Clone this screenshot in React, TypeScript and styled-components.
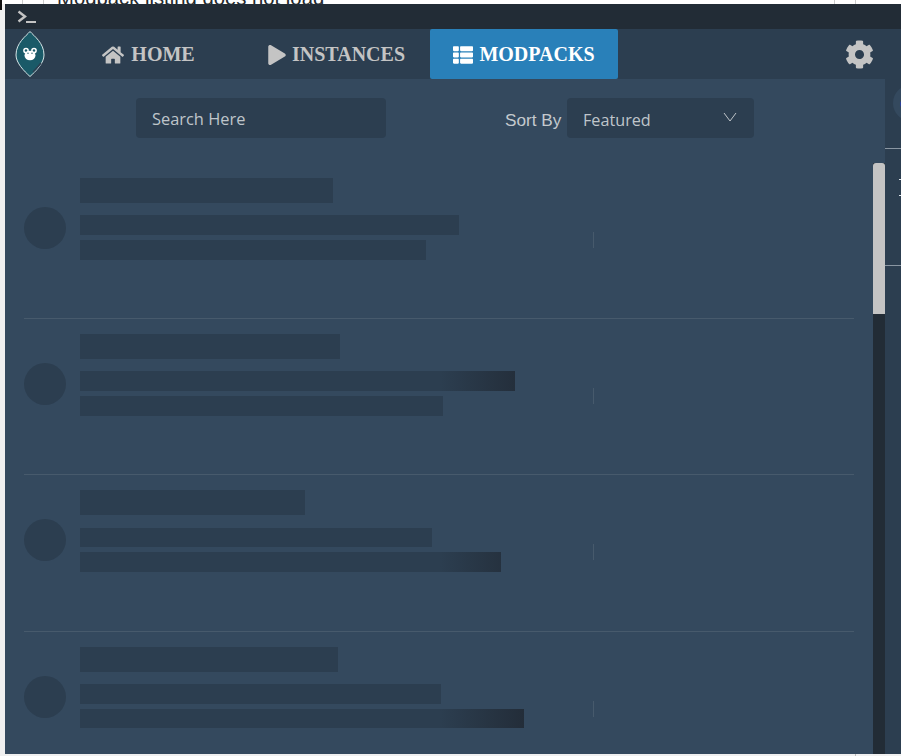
import React from "react";
import styled, { createGlobalStyle } from "styled-components";
import { FaCog, FaHome, FaPlay, FaThList } from "react-icons/fa";

const GlobalStyle = createGlobalStyle`
  html, body {
    margin: 0;
    padding: 0;
    background: #f0f0f0;
    overflow: hidden;
  }
`;

const Page = styled.div`
  width: 901px;
  height: 756px;
  position: relative;
  display: flex;
  flex-direction: column;
  overflow: hidden;
  background: linear-gradient(#bbb, #bbb) 855px 100% / 1px 2px no-repeat, #f0f0f0;
`;

const CornerMark = styled.div`
  position: absolute;
  left: 0;
  top: 0;
  width: 2px;
  height: 10px;
  background: #111;
`;

const BehindStrip = styled.div`
  height: 4px;
  flex: none;
  overflow: hidden;
  background:
    linear-gradient(#ccc, #ccc) 22px 0 / 1px 100% no-repeat,
    linear-gradient(#ccc, #ccc) 43px 0 / 1px 100% no-repeat,
    linear-gradient(#ccc, #ccc) 834px 0 / 1px 100% no-repeat,
    linear-gradient(#ccc, #ccc) 855px 0 / 1px 100% no-repeat,
    #fff;
  padding-left: 57px;
  font: 20.3px/20px "Liberation Sans", Arial, sans-serif;
  color: #24292e;
`;

const BehindText = styled.div`
  margin-top: -12px;
`;

const Window = styled.div`
  flex: 1;
  min-height: 0;
  margin: 0 0 2px 5px;
  display: flex;
  flex-direction: column;
  background: #2c3e50;
`;

const SystemBar = styled.div`
  height: 25px;
  flex: none;
  display: flex;
  align-items: center;
  padding-left: 12px;
  background: #222c36;
`;

const NavBar = styled.nav`
  height: 50px;
  flex: none;
  display: flex;
  align-items: stretch;
  background: #2c3e50;
`;

const LogoSlot = styled.div`
  width: 50px;
  flex: none;
  display: flex;
  align-items: center;
  padding-left: 9px;
  box-sizing: border-box;
`;

const NavItem = styled.a<{ $width: number; $gap: number; $active?: boolean }>`
  width: ${(p) => p.$width}px;
  flex: none;
  display: flex;
  align-items: center;
  justify-content: center;
  gap: ${(p) => p.$gap}px;
  padding-top: 1px;
  box-sizing: border-box;
  border-radius: 2px;
  background: ${(p) => (p.$active ? "#2980b9" : "transparent")};
  color: ${(p) => (p.$active ? "#fff" : "#c4c4c4")};
  font: bold 20px "Liberation Serif", "Times New Roman", serif;
`;

const SettingsButton = styled.div`
  margin-left: auto;
  width: 84px;
  display: flex;
  align-items: center;
  justify-content: center;
  color: #c4c4c4;
`;

const Body = styled.div`
  flex: 1;
  min-height: 0;
  display: flex;
`;

const Content = styled.main`
  width: 880px;
  flex: none;
  display: flex;
  flex-direction: column;
  background: #34495e;
  overflow: hidden;
`;

const Filters = styled.div`
  height: 84px;
  flex: none;
  display: flex;
  padding: 19px 0 0 131px;
  box-sizing: border-box;
`;

const SearchBox = styled.div`
  width: 250px;
  height: 40px;
  border-radius: 4px;
  background: #2c3e50;
  color: #bfc5ca;
  font: 16.4px/42px "Open Sans", sans-serif;
  padding-left: 16px;
  box-sizing: border-box;
`;

const SortLabel = styled.span`
  margin-left: 119px;
  width: 62px;
  color: #c4c9ce;
  font: 17.2px/44px "Liberation Sans", Arial, sans-serif;
`;

const SortSelect = styled.div`
  width: 187px;
  height: 40px;
  border-radius: 4px;
  background: #2c3e50;
  color: #bfc5ca;
  font: 16.2px/45px "Open Sans", sans-serif;
  padding: 0 17px 0 16px;
  box-sizing: border-box;
  display: flex;
  justify-content: space-between;
`;

const Chevron = styled.svg`
  width: 14px;
  height: 10px;
  margin-top: 14px;
`;

const ListArea = styled.div`
  flex: 1;
  min-height: 0;
  display: flex;
`;

const List = styled.div`
  flex: 1;
  min-width: 0;
  overflow: hidden;
`;

const Row = styled.div`
  height: 156.2px;
  box-sizing: border-box;
  margin: 0 19px;
  position: relative;
  padding-top: 15px;
  border-bottom: 1px solid #475a6c;
  display: flex;
  width: 830px;
  &:last-child {
    border-bottom: none;
  }
`;

const Avatar = styled.div`
  width: 42px;
  height: 42px;
  margin-top: 29px;
  margin-right: 14px;
  flex: none;
  border-radius: 50%;
  background: #2c3e50;
`;

const Lines = styled.div`
  display: flex;
  flex-direction: column;
  align-items: flex-start;
`;

const TitleBar = styled.div<{ $width: number }>`
  width: ${(p) => p.$width}px;
  height: 25px;
  margin-bottom: 12.3px;
  background: #2c3e50;
`;

const TextBar = styled.div<{ $width: number; $fade?: boolean }>`
  width: ${(p) => p.$width}px;
  height: 19.7px;
  margin-bottom: 5px;
  background: ${(p) =>
    p.$fade
      ? "linear-gradient(90deg, #2c3e50 0, #2c3e50 360px, #232d39 445px)"
      : "#2c3e50"};
`;

const Tick = styled.div`
  position: absolute;
  left: 569px;
  top: 69px;
  width: 1px;
  height: 16px;
  background: #475a6c;
`;

const ScrollTrack = styled.div`
  width: 12px;
  flex: none;
  background: #222c36;
`;

const ScrollThumb = styled.div`
  height: 151px;
  border-radius: 3px 3px 0 0;
  background: #c4c4c4;
`;

const SidePeek = styled.aside`
  flex: 1;
  min-width: 0;
  position: relative;
  overflow: hidden;
  background: #2c3e50;
`;

const PeekAvatar = styled.div`
  position: absolute;
  left: 8px;
  top: 6px;
  width: 36px;
  height: 36px;
  border-radius: 50%;
  background: #34495e;
`;

const PeekSpot = styled.div`
  position: absolute;
  left: 15px;
  top: 21px;
  width: 4px;
  height: 8px;
  border-radius: 4px 0 0 4px;
  background: #2b3f9e;
`;

const PeekRule = styled.div<{ $top: number }>`
  position: absolute;
  left: 0;
  right: 0;
  top: ${(p) => p.$top}px;
  height: 1px;
  background: #8a96a2;
`;

const PeekMark = styled.div<{ $top: number }>`
  position: absolute;
  right: 0;
  top: ${(p) => p.$top}px;
  width: 2px;
  height: 1px;
  background: #dfe6ec;
`;

const rows = [
  { title: 253, a: 379, b: 346 },
  { title: 260, a: 435, b: 363, fadeA: true },
  { title: 225, a: 352, b: 421, fadeB: true },
  { title: 258, a: 361, b: 444, fadeB: true },
];

function TerminalMark() {
  return (
    <svg width="20" height="14" viewBox="0 0 20 14" fill="none" stroke="#c4c4c4" strokeWidth="2.4">
      <path d="M1.5 1.5 L8 6.5 L1.5 11.5" />
      <path d="M9 12 H19" strokeWidth="2" />
    </svg>
  );
}

function Logo() {
  return (
    <svg width="32" height="48" viewBox="0 0 32 48">
      <path
        d="M16 1.5 C20 6 30 13 30 25 C30 33 22 41 16 46.5 C10 41 2 33 2 25 C2 13 12 6 16 1.5Z"
        fill="#1a5a68"
        stroke="#d7e6e8"
        strokeWidth="1"
      />
      <path d="M27 33 C24 37 22 39 19 42" fill="none" stroke="#2c3e50" strokeWidth="1.5" />
      <circle cx="12" cy="20.5" r="2.1" fill="none" stroke="#fff" strokeWidth="1.5" />
      <circle cx="20" cy="20.5" r="2.1" fill="none" stroke="#fff" strokeWidth="1.5" />
      <ellipse cx="16" cy="25.5" rx="5.5" ry="4.8" fill="#fff" />
      <circle cx="14" cy="23.2" r="0.7" fill="#1a5a68" />
      <circle cx="18" cy="23.2" r="0.7" fill="#1a5a68" />
    </svg>
  );
}

export default function App() {
  return (
    <Page>
      <GlobalStyle />
      <BehindStrip>
        <BehindText>Modpack listing does not load</BehindText>
      </BehindStrip>
      <CornerMark />
      <Window>
        <SystemBar>
          <TerminalMark />
        </SystemBar>
        <NavBar>
          <LogoSlot>
            <Logo />
          </LogoSlot>
          <NavItem $width={187} $gap={7}>
            <FaHome size={22} />
            HOME
          </NavItem>
          <NavItem $width={188} $gap={5}>
            <FaPlay size={20} />
            INSTANCES
          </NavItem>
          <NavItem $width={188} $gap={6} $active>
            <FaThList size={20} />
            MODPACKS
          </NavItem>
          <SettingsButton>
            <FaCog size={29} />
          </SettingsButton>
        </NavBar>
        <Body>
          <Content>
            <Filters>
              <SearchBox>Search Here</SearchBox>
              <SortLabel>Sort By</SortLabel>
              <SortSelect>
                Featured
                <Chevron viewBox="0 0 14 10">
                  <path d="M1 1 L7 9 L13 1" fill="none" stroke="#bfc5ca" strokeWidth="1" />
                </Chevron>
              </SortSelect>
            </Filters>
            <ListArea>
              <List>
                {rows.map((r, i) => (
                  <Row key={i}>
                    <Avatar />
                    <Lines>
                      <TitleBar $width={r.title} />
                      <TextBar $width={r.a} $fade={r.fadeA} />
                      <TextBar $width={r.b} $fade={r.fadeB} />
                    </Lines>
                    <Tick />
                  </Row>
                ))}
              </List>
              <ScrollTrack>
                <ScrollThumb />
              </ScrollTrack>
            </ListArea>
          </Content>
          <SidePeek>
            <PeekAvatar />
            <PeekSpot />
            <PeekRule $top={69} />
            <PeekMark $top={100} />
            <PeekMark $top={116} />
            <PeekRule $top={186} />
          </SidePeek>
        </Body>
      </Window>
    </Page>
  );
}
